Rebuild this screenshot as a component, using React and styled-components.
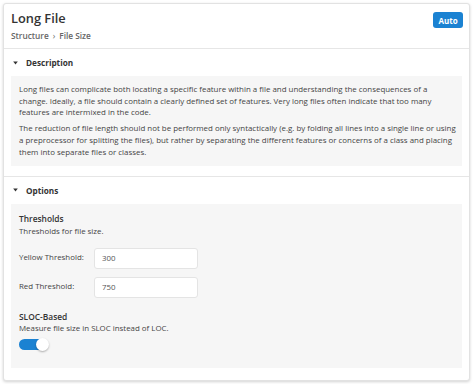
import styled, { createGlobalStyle } from 'styled-components';

const Global = createGlobalStyle`
  body {
    margin: 0;
    background: #fff;
    font-family: 'Open Sans', 'Liberation Sans', sans-serif;
    color: #333;
  }
`;

const Page = styled.div`
  padding: 3px 4px 3px 3px;
`;

const Card = styled.div`
  background: #fff;
  border: 1px solid #e2e2e2;
  border-radius: 3px;
  box-shadow: 0 1px 3px rgba(0, 0, 0, 0.18);
  padding-bottom: 12px;
`;

const Header = styled.div`
  display: flex;
  justify-content: space-between;
  align-items: flex-start;
  padding: 7px 6px 7px 7px;
  border-bottom: 1px solid #e6e6e6;
`;

const Title = styled.div`
  font-size: 12.8px;
  font-weight: 600;
  line-height: 15px;
  color: #333;
`;

const Crumbs = styled.div`
  margin-top: 4px;
  font-size: 8.3px;
  font-weight: 600;
  color: #666;
  line-height: 11px;
  span {
    margin: 0 4px;
    font-weight: 400;
  }
`;

const AutoButton = styled.button`
  margin-top: 1px;
  border: none;
  border-radius: 3px;
  background: #1b82d2;
  color: #fff;
  font-family: inherit;
  font-size: 8px;
  font-weight: 700;
  height: 16px;
  width: 30px;
  padding: 0;
`;

const Section = styled.div`
  border-top: ${(p) => (p.divided ? '1px solid #e6e6e6' : 'none')};
  padding: 0 7px 0 7px;
  margin-top: ${(p) => (p.divided ? '10px' : '0')};
`;

const SectionHead = styled.div`
  display: flex;
  align-items: center;
  height: 27px;
  font-size: 8.2px;
  font-weight: 700;
  color: #333;
  svg {
    margin: 0 8px 0 2px;
  }
`;

const Panel = styled.div`
  background: #f6f6f6;
  padding: 8px 5px 7px 8px;
  font-size: 7.92px;
  line-height: 11.7px;
  color: #444;
`;

const Para = styled.p`
  margin: 0;
  & + & {
    margin-top: 4.3px;
  }
`;

const GroupTitle = styled.div`
  font-size: 8.4px;
  font-weight: 600;
  color: #333;
  line-height: 13px;
`;

const GroupHint = styled.div`
  font-size: 7.9px;
  color: #444;
  line-height: ${(p) => (p.tight ? '11px' : '13px')};
`;

const Fields = styled.div`
  display: grid;
  grid-template-columns: 75px 104px;
  row-gap: 8px;
  align-items: center;
  margin: 10px 0 12px;
`;

const Label = styled.label`
  font-size: 7.9px;
  color: #444;
`;

const Input = styled.input`
  box-sizing: border-box;
  height: 21px;
  width: 104px;
  border: 1px solid #e4e4e4;
  border-radius: 3px;
  background: #fff;
  padding: 0 7px;
  font-family: inherit;
  font-size: 7.9px;
  color: #555;
`;

const Toggle = styled.div`
  position: relative;
  width: 29px;
  height: 11px;
  margin: 5px 0 11px 0;
  border-radius: 6px;
  background: #1b82d2;
`;

const Knob = styled.div`
  position: absolute;
  right: -1px;
  top: -1px;
  width: 13px;
  height: 13px;
  border-radius: 50%;
  background: #fff;
  box-shadow: 0 1px 2px rgba(0, 0, 0, 0.3);
`;

const Caret = () => (
  <svg width="5" height="4" viewBox="0 0 5 4">
    <path d="M0.2 0.5 L4.8 0.5 L2.5 3.6 Z" fill="#333" />
  </svg>
);

export default function App() {
  return (
    <>
      <Global />
      <Page>
        <Card>
          <Header>
            <div>
              <Title>Long File</Title>
              <Crumbs>
                Structure<span>›</span>File Size
              </Crumbs>
            </div>
            <AutoButton>Auto</AutoButton>
          </Header>
          <Section>
            <SectionHead>
              <Caret />
              Description
            </SectionHead>
            <Panel>
              <Para>
                Long files can complicate both locating a specific feature within a file and understanding the
                consequences of a<br />
                change. Ideally, a file should contain a clearly defined set of features. Very long files often
                indicate that too many features are intermixed in the code.
              </Para>
              <Para>
                The reduction of file length should not be performed only syntactically (e.g. by folding all lines into
                a single line or using a preprocessor for splitting the files), but rather by separating the different
                features or concerns of a class and placing them into separate files or classes.
              </Para>
            </Panel>
          </Section>
          <Section divided>
            <SectionHead>
              <Caret />
              Options
            </SectionHead>
            <Panel>
              <GroupTitle>Thresholds</GroupTitle>
              <GroupHint>Thresholds for file size.</GroupHint>
              <Fields>
                <Label>Yellow Threshold:</Label>
                <Input defaultValue="300" />
                <Label>Red Threshold:</Label>
                <Input defaultValue="750" />
              </Fields>
              <GroupTitle>SLOC-Based</GroupTitle>
              <GroupHint tight>Measure file size in SLOC instead of LOC.</GroupHint>
              <Toggle>
                <Knob />
              </Toggle>
            </Panel>
          </Section>
        </Card>
      </Page>
    </>
  );
}
